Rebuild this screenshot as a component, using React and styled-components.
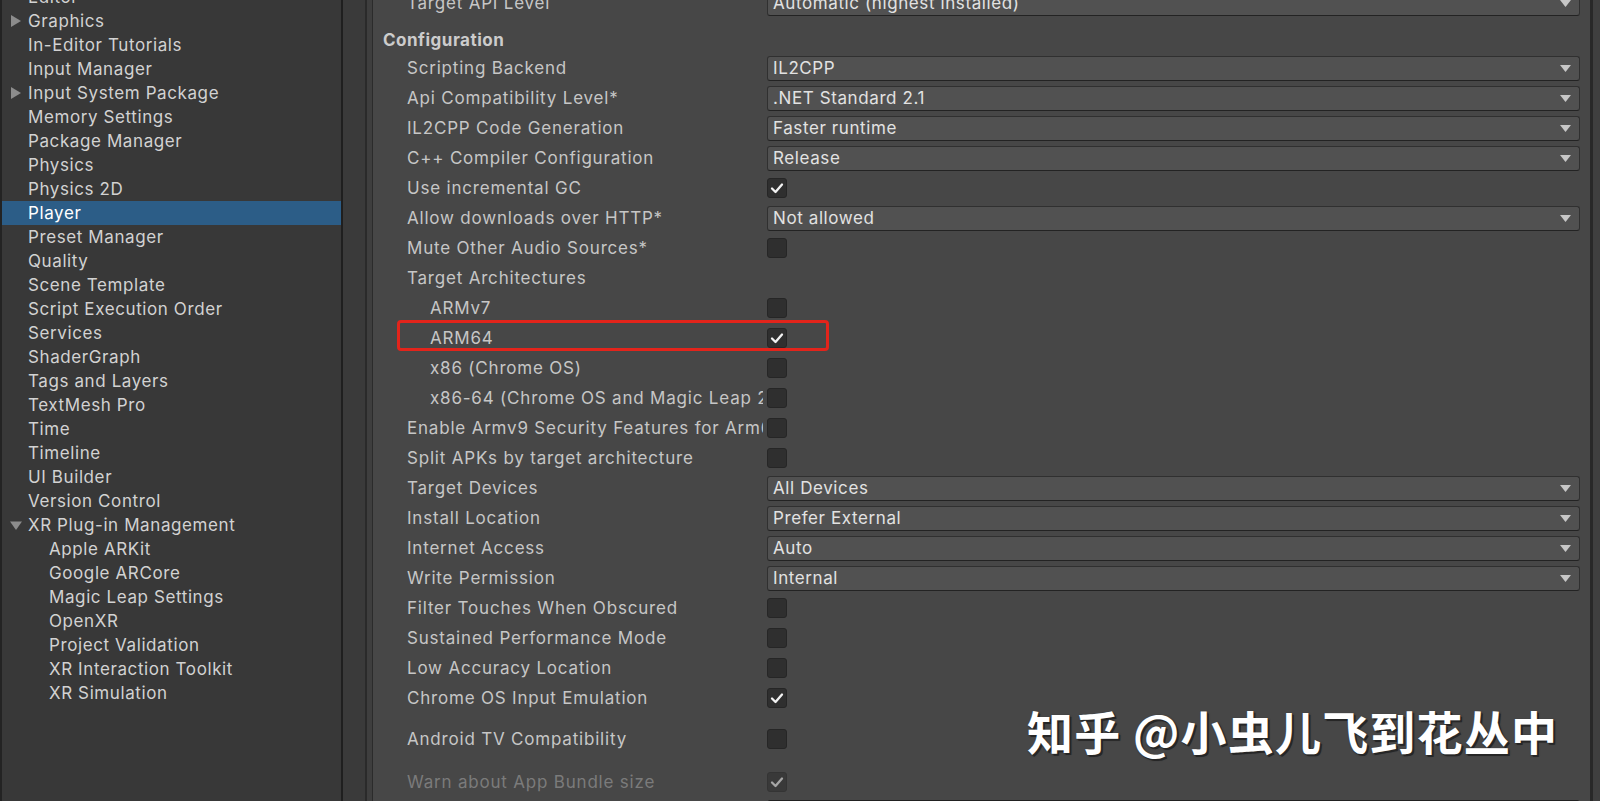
import React from "react"
import styled, { createGlobalStyle } from "styled-components"

const GlobalStyle = createGlobalStyle`
  html, body {
    margin: 0;
    padding: 0;
    background: #383838;
  }
  body {
    font-family: Inter, "Noto Sans", sans-serif;
    overflow: hidden;
  }
`

const Window = styled.div`
  position: relative;
  display: flex;
  width: 1600px;
  height: 801px;
  overflow: hidden;
  background: #383838;
`

const Rule = styled.div`
  flex: none;
  width: ${({ $w }) => $w}px;
  background: ${({ $c }) => $c};
`

/* ---------- left tree ---------- */

const Sidebar = styled.nav`
  flex: none;
  width: 339px;
  background: #383838;
  overflow: hidden;
`

const TreeList = styled.ul`
  list-style: none;
  margin: -15px 0 0;
  padding: 0;
`

const TreeItem = styled.li`
  display: flex;
  align-items: center;
  height: 24px;
  padding-left: ${({ $level }) => 8 + $level * 21}px;
  background: ${({ $selected }) => ($selected ? "#2c5d87" : "transparent")};
  color: ${({ $selected }) => ($selected ? "#ffffff" : "#d2d2d2")};
  font-size: 17px;
  letter-spacing: 0.6px;
  white-space: nowrap;
`

const Toggle = styled.span`
  flex: none;
  width: 18px;
  display: flex;
  align-items: center;
`

const Gutter = styled.div`
  flex: none;
  width: ${({ $w }) => $w}px;
  background: ${({ $c }) => $c};
`

/* ---------- inspector ---------- */

const Inspector = styled.main`
  flex: 1;
  background: #474747;
  overflow: hidden;
  padding: 0 10px;
`

const Sheet = styled.div`
  margin-top: -12px;
`

const SectionTitle = styled.div`
  padding: 10px 0 1px;
  line-height: 24px;
  font-size: 17px;
  font-weight: 700;
  color: #cccccc;
  letter-spacing: 0.5px;
`

const Row = styled.div`
  display: grid;
  grid-template-columns: 380px 1fr;
  column-gap: 4px;
  align-items: center;
  height: 30px;
  margin-top: ${({ $gap }) => $gap || 0}px;
`

const Label = styled.div`
  padding-left: ${({ $sub }) => ($sub ? 47 : 24)}px;
  font-size: 17px;
  letter-spacing: 0.8px;
  color: ${({ $disabled }) => ($disabled ? "#7b7b7b" : "#c6c6c6")};
  white-space: nowrap;
  overflow: hidden;
`

const Dropdown = styled.div`
  box-sizing: border-box;
  height: 25px;
  display: flex;
  align-items: center;
  justify-content: space-between;
  padding: 0 8px 0 5px;
  background: #515151;
  border: 1px solid #303030;
  border-bottom-color: #232323;
  border-radius: 3px;
  color: #e2e2e2;
  font-size: 17px;
  letter-spacing: 0.6px;
  white-space: nowrap;
`

const Box = styled.div`
  box-sizing: border-box;
  width: 20px;
  height: 20px;
  display: flex;
  align-items: center;
  justify-content: center;
  background: #2f2f2f;
  border: 1px solid #262626;
  border-radius: 3px;
  opacity: ${({ $disabled }) => ($disabled ? 0.55 : 1)};
`

const Field = styled.div`
  box-sizing: border-box;
  height: 24px;
  background: #2a2a2a;
  border: 1px solid #212121;
  border-radius: 3px;
`

const Watermark = styled.div`
  position: absolute;
  left: 1027px;
  top: 697px;
  font-family: "Noto Sans CJK SC", sans-serif;
  font-size: 46px;
  font-weight: 700;
  color: #ffffff;
  letter-spacing: 1.2px;
  text-shadow: 2px 2px 0 #262626, 1px 1px 2px #1e1e1e;
  white-space: nowrap;
`

const Highlight = styled.div`
  position: absolute;
  left: 397px;
  top: 320px;
  width: 432px;
  height: 31px;
  box-sizing: border-box;
  border: 3px solid #e3241b;
  border-radius: 4px;
  pointer-events: none;
`

const Caret = ({ open }) => (
  <svg width="12" height="12" viewBox="0 0 12 12">
    {open ? (
      <path d="M0 2.5 H12 L6 11 Z" fill="#8c8c8c" />
    ) : (
      <path d="M1 0 V12 L11 6 Z" fill="#8c8c8c" />
    )}
  </svg>
)

const DropArrow = () => (
  <svg width="11" height="7" viewBox="0 0 11 7">
    <path d="M0 0 H11 L5.5 7 Z" fill="#c6c6c6" />
  </svg>
)

const Check = () => (
  <svg width="14" height="12" viewBox="0 0 14 12">
    <path
      d="M2 6.5 L5.5 10 L12 2.5"
      fill="none"
      stroke="#f2f2f2"
      strokeWidth="2.3"
      strokeLinecap="round"
      strokeLinejoin="round"
    />
  </svg>
)

const tree = [
  { name: "Editor" },
  { name: "Graphics", caret: "right" },
  { name: "In-Editor Tutorials" },
  { name: "Input Manager" },
  { name: "Input System Package", caret: "right" },
  { name: "Memory Settings" },
  { name: "Package Manager" },
  { name: "Physics" },
  { name: "Physics 2D" },
  { name: "Player", selected: true },
  { name: "Preset Manager" },
  { name: "Quality" },
  { name: "Scene Template" },
  { name: "Script Execution Order" },
  { name: "Services" },
  { name: "ShaderGraph" },
  { name: "Tags and Layers" },
  { name: "TextMesh Pro" },
  { name: "Time" },
  { name: "Timeline" },
  { name: "UI Builder" },
  { name: "Version Control" },
  { name: "XR Plug-in Management", caret: "down" },
  { name: "Apple ARKit", level: 1 },
  { name: "Google ARCore", level: 1 },
  { name: "Magic Leap Settings", level: 1 },
  { name: "OpenXR", level: 1 },
  { name: "Project Validation", level: 1 },
  { name: "XR Interaction Toolkit", level: 1 },
  { name: "XR Simulation", level: 1 },
]

const settings = [
  { label: "Scripting Backend", drop: "IL2CPP" },
  { label: "Api Compatibility Level*", drop: ".NET Standard 2.1" },
  { label: "IL2CPP Code Generation", drop: "Faster runtime" },
  { label: "C++ Compiler Configuration", drop: "Release" },
  { label: "Use incremental GC", check: true },
  { label: "Allow downloads over HTTP*", drop: "Not allowed" },
  { label: "Mute Other Audio Sources*", check: false },
  { label: "Target Architectures" },
  { label: "ARMv7", sub: true, check: false },
  { label: "ARM64", sub: true, check: true },
  { label: "x86 (Chrome OS)", sub: true, check: false },
  { label: "x86-64 (Chrome OS and Magic Leap 2)", sub: true, check: false },
  { label: "Enable Armv9 Security Features for Arm64", check: false },
  { label: "Split APKs by target architecture", check: false },
  { label: "Target Devices", drop: "All Devices" },
  { label: "Install Location", drop: "Prefer External" },
  { label: "Internet Access", drop: "Auto" },
  { label: "Write Permission", drop: "Internal" },
  { label: "Filter Touches When Obscured", check: false },
  { label: "Sustained Performance Mode", check: false },
  { label: "Low Accuracy Location", check: false },
  { label: "Chrome OS Input Emulation", check: true },
  { label: "Android TV Compatibility", check: false, gap: 11 },
  { label: "Warn about App Bundle size", check: true, disabled: true, gap: 13 },
  { label: "App Bundle size threshold", field: true, disabled: true },
]

const Value = ({ item }) => {
  if (item.drop)
    return (
      <Dropdown>
        <span>{item.drop}</span>
        <DropArrow />
      </Dropdown>
    )
  if (item.field) return <Field />
  if (item.check !== undefined)
    return <Box $disabled={item.disabled}>{item.check && <Check />}</Box>
  return <span />
}

export default function App() {
  return (
    <>
      <GlobalStyle />
      <Window>
        <Rule $w={2} $c="#232323" />
        <Sidebar>
          <TreeList>
            {tree.map((t) => (
              <TreeItem key={t.name} $level={t.level || 0} $selected={t.selected}>
                <Toggle>{t.caret && <Caret open={t.caret === "down"} />}</Toggle>
                {t.name}
              </TreeItem>
            ))}
          </TreeList>
        </Sidebar>
        <Rule $w={2} $c="#1f1f1f" />
        <Gutter $w={22} $c="#3a3a3a" />
        <Rule $w={2} $c="#2a2a2a" />
        <Gutter $w={5} $c="#3e3e3e" />
        <Rule $w={1} $c="#2b2b2b" />
        <Inspector>
          <Sheet>
            <Row>
              <Label>Target API Level</Label>
              <Dropdown>
                <span>Automatic (highest installed)</span>
                <DropArrow />
              </Dropdown>
            </Row>
            <SectionTitle>Configuration</SectionTitle>
            {settings.map((s) => (
              <Row key={s.label} $gap={s.gap}>
                <Label $sub={s.sub} $disabled={s.disabled}>
                  {s.label}
                </Label>
                <Value item={s} />
              </Row>
            ))}
          </Sheet>
        </Inspector>
        <Rule $w={3} $c="#282828" />
        <Gutter $w={7} $c="#3f3f3f" />
        <Highlight />
        <Watermark>知乎 @小虫儿飞到花丛中</Watermark>
      </Window>
    </>
  )
}
